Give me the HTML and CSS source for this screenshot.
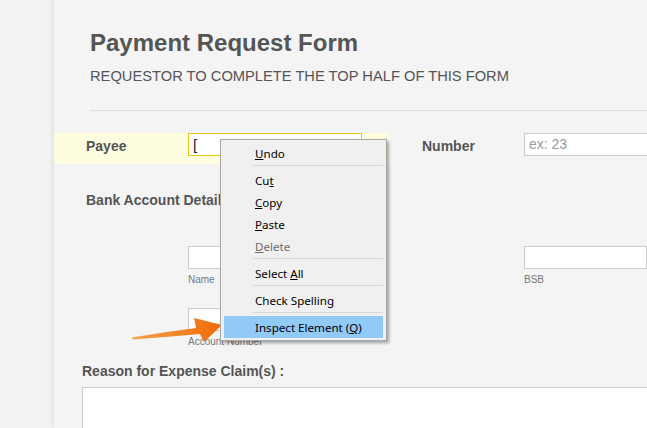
FILE: index.html
```html
<!DOCTYPE html>
<html>
<head>
<meta charset="utf-8">
<link rel="stylesheet" href="styles.css">
</head>
<body>
<div class="page">
  <div class="gutter"></div>
  <div class="main">
    <div class="header">
      <h1 class="title">Payment Request Form</h1>
      <div class="subtitle">REQUESTOR TO COMPLETE THE TOP HALF OF THIS FORM</div>
    </div>
    <div class="rule"></div>

    <div class="row top-row">
      <div class="col col-hl">
        <div class="label">Payee</div>
        <div class="input input-focus"><span class="caret">[</span></div>
      </div>
      <div class="col">
        <div class="label">Number</div>
        <div class="input input-wide"><span class="ph">ex: 23</span></div>
      </div>
    </div>

    <div class="section-label">Bank Account Details</div>

    <div class="row sub-row">
      <div class="col">
        <div class="label"></div>
        <div class="field">
          <div class="input"></div>
          <div class="sublabel">Name</div>
        </div>
      </div>
      <div class="col">
        <div class="label"></div>
        <div class="field">
          <div class="input"></div>
          <div class="sublabel">BSB</div>
        </div>
      </div>
    </div>

    <div class="row sub-row2">
      <div class="col">
        <div class="label"></div>
        <div class="field">
          <div class="input"></div>
          <div class="sublabel">Account Number</div>
        </div>
      </div>
    </div>

    <div class="reason-label">Reason for Expense Claim(s) :</div>
    <div class="textarea"></div>
  </div>
</div>

<svg class="arrow" width="100" height="36" viewBox="0 0 100 36">
  <defs>
    <linearGradient id="ag" x1="0" y1="0" x2="1" y2="0">
      <stop offset="0" stop-color="#f7a24a"/>
      <stop offset="1" stop-color="#ef6a08"/>
    </linearGradient>
  </defs>
  <path d="M2 27.5 Q34 22 66 18 L64 8 L92 15 L74 32 L70 24 Q36 27 3 29.5 Z" fill="url(#ag)"/>
</svg>

<div class="menu">
  <div class="mi"><u>U</u>ndo</div>
  <div class="sep"></div>
  <div class="mi">Cu<u>t</u></div>
  <div class="mi"><u>C</u>opy</div>
  <div class="mi"><u>P</u>aste</div>
  <div class="mi dis"><u>D</u>elete</div>
  <div class="sep"></div>
  <div class="mi">Select <u>A</u>ll</div>
  <div class="sep"></div>
  <div class="mi">Check Spellin<u>g</u></div>
  <div class="sep"></div>
  <div class="mi active">Inspect Element (<u>Q</u>)</div>
</div>
</body>
</html>
```

FILE: styles.css
```css
html, body {
  margin: 0;
  padding: 0;
  height: 100%;
  overflow: hidden;
}
body {
  background: #f3f3f3;
  font-family: "Liberation Sans", Arial, sans-serif;
  color: #555;
}
.page {
  display: flex;
  height: 428px;
}
.gutter {
  width: 54px;
  flex: none;
  background: #f3f3f3;
}
.main {
  flex: 1;
  background: #f4f4f4;
  box-shadow: -2px 0 4px rgba(0,0,0,0.07);
  overflow: hidden;
}
.header {
  padding: 29px 0 0 36px;
}
.title {
  margin: 0;
  font-size: 24px;
  font-weight: bold;
  line-height: 28px;
  color: #555;
}
.subtitle {
  margin-top: 10px;
  font-size: 14.7px;
  line-height: 18px;
  color: #555;
}
.rule {
  margin: 25px 0 0 36px;
  height: 1px;
  background: #dcdcdc;
}
.row {
  display: flex;
}
.top-row {
  margin-top: 22px;
}
.col {
  width: 336px;
  display: flex;
  align-items: flex-start;
  flex: none;
}
.col + .col {
  flex: 1;
  width: auto;
}
.col-hl {
  background: #fffde0;
  height: 31px;
}
.label {
  width: 102px;
  padding: 2px 0 0 32px;
  flex: none;
  font-weight: bold;
  font-size: 14px;
  line-height: 23px;
  color: #555;
}
.input {
  box-sizing: border-box;
  width: 174px;
  height: 23px;
  background: #fff;
  border: 1px solid #ccc;
  font-size: 14px;
  line-height: 21px;
  padding-left: 4px;
}
.input-focus {
  border-color: #f1c40f;
}
.input-wide {
  width: 200px;
  flex: 1;
}
.field {
  display: flex;
  flex-direction: column;
  flex: 1;
}
.field .input {
  width: auto;
}
.col:first-child .field {
  flex: none;
  width: 174px;
}
.caret {
  color: #222;
  font-size: 15px;
}
.ph {
  color: #999;
  font-size: 14px;
}
.section-label {
  margin: 27px 0 0 32px;
  font-weight: bold;
  font-size: 14px;
  line-height: 18px;
  color: #555;
}
.sub-row {
  margin-top: 37px;
}
.sub-row2 {
  margin-top: 22px;
}
.sublabel {
  font-size: 10px;
  line-height: 12px;
  margin-top: 5px;
  color: #777;
}
.reason-label {
  margin: 14px 0 0 28px;
  font-weight: bold;
  font-size: 14px;
  line-height: 18px;
  color: #555;
}
.textarea {
  margin: 7px 0 0 28px;
  height: 60px;
  background: #fff;
  border: 1px solid #ccc;
  border-right: none;
}
.arrow {
  position: absolute;
  left: 130px;
  top: 310px;
}
.menu {
  position: absolute;
  left: 220px;
  top: 139px;
  width: 161px;
  padding: 2px 2px;
  background: #f0f0f0;
  border: 1px solid #a8a8a8;
  box-shadow: 2px 2px 3px rgba(0,0,0,0.35);
  font-family: "Noto Sans", "Open Sans", sans-serif;
  font-size: 11.6px;
  color: #000;
}
.mi {
  height: 20px;
  padding-top: 2px;
  line-height: 20px;
  padding-left: 31px;
  margin: 0 1px;
}
.mi u {
  text-underline-offset: 1px;
}
.dis {
  color: #6d6d6d;
}
.active {
  background: #91c9f7;
}
.sep {
  height: 1px;
  background: #d7d7d7;
  margin: 1px 1px 3px 30px;
}
```
